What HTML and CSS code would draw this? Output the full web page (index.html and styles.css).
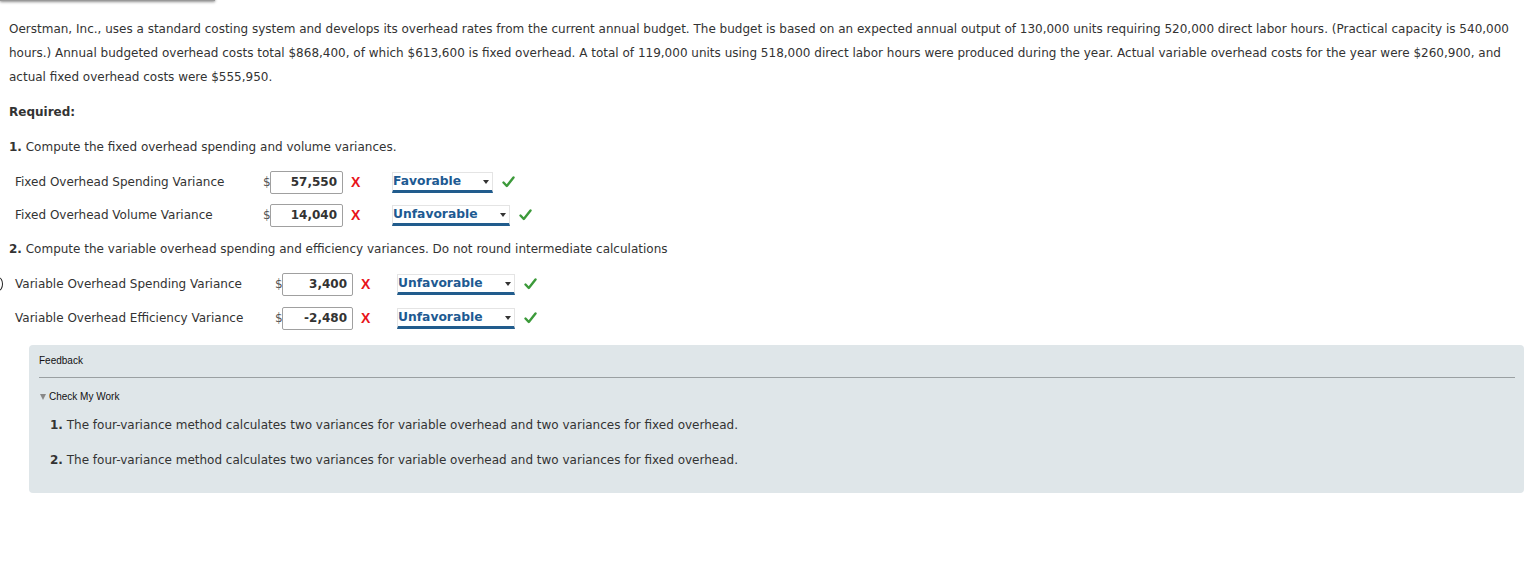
FILE: index.html
```html
<!DOCTYPE html>
<html>
<head>
<meta charset="utf-8">
<link rel="stylesheet" href="styles.css">
</head>
<body>
<div class="topbar"></div>
<div class="marker"></div>
<div class="page">
  <p class="intro">Oerstman, Inc., uses a standard costing system and develops its overhead rates from the current annual budget. The budget is based on an expected annual output of 130,000 units requiring 520,000 direct labor hours. (Practical capacity is 540,000 hours.) Annual budgeted overhead costs total $868,400, of which $613,600 is fixed overhead. A total of 119,000 units using 518,000 direct labor hours were produced during the year. Actual variable overhead costs for the year were $260,900, and actual fixed overhead costs were $555,950.</p>
  <p class="required">Required:</p>
  <p class="q q1"><b>1.</b> Compute the fixed overhead spending and volume variances.</p>
  <div class="grid g1">
    <div class="row">
      <span class="label">Fixed Overhead Spending Variance</span>
      <span class="dollar">$</span><span class="box">57,550</span><span class="x">X</span>
      <span class="sel">Favorable<span class="arrow"></span></span><svg class="ok" width="13" height="12" viewBox="0 0 13 12"><path d="M1.5 6.5 L4.8 10 L11.5 1.5" fill="none" stroke="#3c9a3a" stroke-width="2.4" stroke-linecap="round" stroke-linejoin="round"/></svg>
    </div>
    <div class="row">
      <span class="label">Fixed Overhead Volume Variance</span>
      <span class="dollar">$</span><span class="box">14,040</span><span class="x">X</span>
      <span class="sel">Unfavorable<span class="arrow"></span></span><svg class="ok" width="13" height="12" viewBox="0 0 13 12"><path d="M1.5 6.5 L4.8 10 L11.5 1.5" fill="none" stroke="#3c9a3a" stroke-width="2.4" stroke-linecap="round" stroke-linejoin="round"/></svg>
    </div>
  </div>
  <p class="q q2"><b>2.</b> Compute the variable overhead spending and efficiency variances. Do not round intermediate calculations</p>
  <div class="grid g2">
    <div class="row">
      <span class="label">Variable Overhead Spending Variance</span>
      <span class="dollar">$</span><span class="box">3,400</span><span class="x">X</span>
      <span class="sel">Unfavorable<span class="arrow"></span></span><svg class="ok" width="13" height="12" viewBox="0 0 13 12"><path d="M1.5 6.5 L4.8 10 L11.5 1.5" fill="none" stroke="#3c9a3a" stroke-width="2.4" stroke-linecap="round" stroke-linejoin="round"/></svg>
    </div>
    <div class="row">
      <span class="label">Variable Overhead Efficiency Variance</span>
      <span class="dollar">$</span><span class="box">-2,480</span><span class="x">X</span>
      <span class="sel">Unfavorable<span class="arrow"></span></span><svg class="ok" width="13" height="12" viewBox="0 0 13 12"><path d="M1.5 6.5 L4.8 10 L11.5 1.5" fill="none" stroke="#3c9a3a" stroke-width="2.4" stroke-linecap="round" stroke-linejoin="round"/></svg>
    </div>
  </div>
  <div class="feedback">
    <div class="fb-title">Feedback</div>
    <div class="fb-rule"></div>
    <div class="fb-check"><span class="tri"></span>Check My Work</div>
    <p class="fb-item"><b>1.</b> The four-variance method calculates two variances for variable overhead and two variances for fixed overhead.</p>
    <p class="fb-item"><b>2.</b> The four-variance method calculates two variances for variable overhead and two variances for fixed overhead.</p>
  </div>
</div>
</body>
</html>
```
FILE: styles.css
```css
html, body { margin: 0; padding: 0; background: #fff; }
body {
  font-family: "DejaVu Sans", Verdana, sans-serif;
  font-size: 12px;
  color: #333;
  position: relative;
  height: 583px;
  overflow: hidden;
}
.topbar {
  position: absolute;
  left: 0; top: -4px;
  width: 215px; height: 5px;
  background: #999;
  box-shadow: 0 1px 3px rgba(0,0,0,0.45);
}
.marker {
  position: absolute;
  left: -6px; top: 277px;
  width: 7px; height: 12px;
  border: 1.5px solid #222;
  border-radius: 50%;
}
.page { padding: 17px 9px 0 9px; }
p { margin: 0; }
.intro { line-height: 24px; margin-bottom: 11px; }
.required { font-weight: bold; line-height: 24px; margin-bottom: 11px; }
.q { line-height: 24px; margin-bottom: 11px; }
.q b { font-weight: bold; }
.q1 { margin-bottom: 12px; }
.q2 { margin-top: 11px; margin-bottom: 12px; }
.grid { display: flex; flex-direction: column; gap: 11px; }
.g2 { gap: 12px; }
.row { display: flex; align-items: center; height: 22px; }
.label { padding-left: 6px; }
.g1 .label { width: 248px; }
.g2 .label { width: 260px; }
.dollar { color: #555; width: 7px; }
.box {
  box-sizing: border-box;
  width: 73px; height: 23px;
  border: 1px solid #a0a0a0;
  border-radius: 2px;
  font-weight: bold;
  text-align: right;
  padding-right: 5px;
  line-height: 21px;
  color: #333;
}
.g2 .box { width: 71px; }
.x { color: #e8141a; font-weight: bold; margin-left: 8px; width: 41px; font-family: "Liberation Sans", Arial, sans-serif; font-size: 14px; }
.g2 .x { width: 36px; }
.sel {
  position: relative;
  display: inline-block;
  color: #1e5a92;
  font-weight: bold;
  font-size: 12.3px;
  line-height: 17px;
  padding-right: 31px;
  border: 1px solid #e4e4e4;
  border-bottom: 3px solid #215c8d;
  margin-top: 0;
}
.arrow {
  position: absolute;
  right: 3px; top: 7px;
  width: 0; height: 0;
  border-left: 3px solid transparent;
  border-right: 3px solid transparent;
  border-top: 4px solid #333;
}
.ok { margin-left: 9px; }
.feedback {
  margin: 16px -5px 0 20px;
  background: #dfe6e9;
  border-radius: 4px;
  padding: 9px 9px 21px 10px;
}
.fb-title { font-family: "Liberation Sans", Arial, sans-serif; font-size: 10px; color: #111; line-height: 14px; }
.fb-rule { height: 1px; background: #9aa0a2; margin: 9px 0 12px 0; }
.fb-check { font-family: "Liberation Sans", Arial, sans-serif; font-size: 10px; color: #111; line-height: 14px; display: flex; align-items: center; padding-left: 1px; }
.tri { width: 0; height: 0; border-left: 3px solid transparent; border-right: 3px solid transparent; border-top: 6px solid #888; margin-right: 3px; }
.fb-item { padding-left: 11px; line-height: 24px; margin-top: 9px; }
.fb-item + .fb-item { margin-top: 11px; }
```
